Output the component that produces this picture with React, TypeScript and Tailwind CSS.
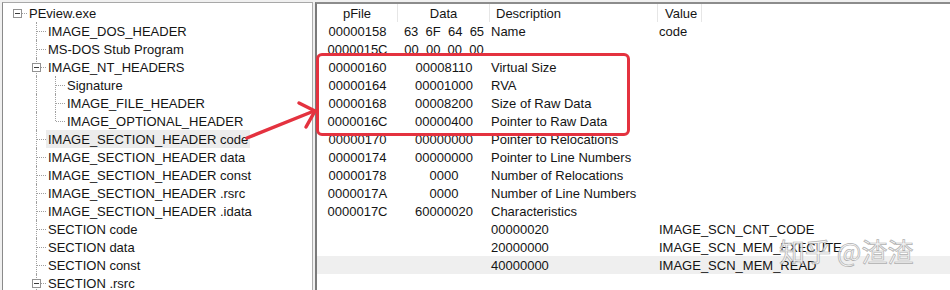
import React from 'react';

type TreeItem = {
  label: string;
  level: number;
  expander?: boolean;
  last?: boolean;
  selected?: boolean;
};

const treeItems: TreeItem[] = [
  { label: 'PEview.exe', level: 0, expander: true },
  { label: 'IMAGE_DOS_HEADER', level: 1 },
  { label: 'MS-DOS Stub Program', level: 1 },
  { label: 'IMAGE_NT_HEADERS', level: 1, expander: true },
  { label: 'Signature', level: 2 },
  { label: 'IMAGE_FILE_HEADER', level: 2 },
  { label: 'IMAGE_OPTIONAL_HEADER', level: 2, last: true },
  { label: 'IMAGE_SECTION_HEADER code', level: 1, selected: true },
  { label: 'IMAGE_SECTION_HEADER data', level: 1 },
  { label: 'IMAGE_SECTION_HEADER const', level: 1 },
  { label: 'IMAGE_SECTION_HEADER .rsrc', level: 1 },
  { label: 'IMAGE_SECTION_HEADER .idata', level: 1 },
  { label: 'SECTION code', level: 1 },
  { label: 'SECTION data', level: 1 },
  { label: 'SECTION const', level: 1 },
  { label: 'SECTION .rsrc', level: 1, expander: true },
];

const rows = [
  { pFile: '00000158', data: '63  6F  64  65', desc: 'Name', value: 'code' },
  { pFile: '0000015C', data: '00  00  00  00', desc: '', value: '' },
  { pFile: '00000160', data: '00008110', desc: 'Virtual Size', value: '' },
  { pFile: '00000164', data: '00001000', desc: 'RVA', value: '' },
  { pFile: '00000168', data: '00008200', desc: 'Size of Raw Data', value: '' },
  { pFile: '0000016C', data: '00000400', desc: 'Pointer to Raw Data', value: '' },
  { pFile: '00000170', data: '00000000', desc: 'Pointer to Relocations', value: '' },
  { pFile: '00000174', data: '00000000', desc: 'Pointer to Line Numbers', value: '' },
  { pFile: '00000178', data: '0000', desc: 'Number of Relocations', value: '' },
  { pFile: '0000017A', data: '0000', desc: 'Number of Line Numbers', value: '' },
  { pFile: '0000017C', data: '60000020', desc: 'Characteristics', value: '' },
  { pFile: '', data: '', desc: '00000020', value: 'IMAGE_SCN_CNT_CODE' },
  { pFile: '', data: '', desc: '20000000', value: 'IMAGE_SCN_MEM_EXECUTE' },
  { pFile: '', data: '', desc: '40000000', value: 'IMAGE_SCN_MEM_READ', selected: true },
];

const Connector: React.FC<{ item: TreeItem }> = ({ item }) => {
  const isRoot = item.level === 0;
  return (
    <div className="relative w-[19px] h-[18px] shrink-0">
      {!isRoot && (
        <div
          className={`absolute left-[9px] top-0 border-l border-dotted border-[#a0a0a0] ${
            item.last ? 'h-[9px]' : 'h-[18px]'
          }`}
        />
      )}
      <div className="absolute left-[10px] top-[9px] w-[9px] border-t border-dotted border-[#a0a0a0]" />
      {item.expander && (
        <div className="absolute left-[5px] top-[5px] w-[9px] h-[9px] border border-[#929292] bg-white flex items-center justify-center">
          <div className="w-[5px] h-px bg-[#3c3c3c]" />
        </div>
      )}
    </div>
  );
};

const TreeRow: React.FC<{ item: TreeItem }> = ({ item }) => (
  <div className="flex h-[18px] items-center">
    {item.level >= 1 && <div className="w-[19px] h-[18px] shrink-0" />}
    {item.level >= 2 && (
      <div className="relative w-[19px] h-[18px] shrink-0">
        <div className="absolute left-[9px] top-0 h-[18px] border-l border-dotted border-[#a0a0a0]" />
      </div>
    )}
    <Connector item={item} />
    <span
      className={`px-[2px] h-[18px] leading-[20px] whitespace-nowrap ${item.selected ? 'bg-[#ececec]' : ''}`}
    >
      {item.label}
    </span>
  </div>
);

const App: React.FC = () => {
  return (
    <div
      className="relative w-[950px] h-[290px] overflow-hidden bg-[#f0f0f0] flex text-[13px] text-[#141414]"
      style={{ fontFamily: '"Liberation Sans", Arial, sans-serif' }}
    >
      {/* tree pane */}
      <div className="ml-[2px] mt-[2px] w-[311px] shrink-0 bg-white border-l border-t border-r border-l-[#8a8a8a] border-t-[#a8a8a8] border-r-[#adadad] pt-[1px] pl-[5px]">
        {treeItems.map((item) => (
          <TreeRow key={item.label} item={item} />
        ))}
      </div>

      {/* list pane */}
      <div className="ml-[2px] mt-[2px] flex-1 bg-white border-l-2 border-t-2 border-l-[#7a7a7a] border-t-[#8c8c8c]">
        <div className="flex h-[18px] leading-[20px]">
          <div className="w-[81px] text-center border-r border-[#e6e6e6]">pFile</div>
          <div className="w-[92px] text-center border-r border-[#e6e6e6]">Data</div>
          <div className="w-[168px] pl-[6px] border-r border-[#e6e6e6]">Description</div>
          <div className="w-[44px] pl-[7px] border-r border-[#e6e6e6]">Value</div>
        </div>
        {rows.map((r, i) => (
          <div
            key={i}
            className={`flex h-[18px] leading-[20px] whitespace-pre ${r.selected ? 'bg-[#efefef]' : ''}`}
          >
            <div className="w-[81px] text-center">{r.pFile}</div>
            <div className="w-[92px] text-center">{r.data}</div>
            <div className="w-[168px] pl-px">{r.desc}</div>
            <div className="pl-px">{r.value}</div>
          </div>
        ))}
      </div>

      {/* red annotation box */}
      <div className="absolute left-[316px] top-[53px] w-[314px] h-[83px] border-[3px] border-[#e4323f] rounded-[6px]" />

      {/* arrow */}
      <svg className="absolute left-0 top-0" width="950" height="290" viewBox="0 0 950 290">
        <g stroke="#e4323f" strokeWidth="3.5" strokeLinecap="round" fill="none">
          <line x1="247" y1="138" x2="314" y2="111" />
          <polyline points="299,103 315,111 306,127" strokeLinejoin="round" />
        </g>
      </svg>

      {/* watermark */}
      <div
        className="absolute left-[779px] top-[236px] text-[26px] leading-[30px] whitespace-nowrap text-[#f7f7f7] [-webkit-text-stroke:0.7px_#a9a9a9] opacity-90"
        style={{ fontFamily: '"Noto Sans CJK SC", "Noto Sans", sans-serif' }}
      >
        知乎 @渣渣
      </div>
    </div>
  );
};

export default App;
